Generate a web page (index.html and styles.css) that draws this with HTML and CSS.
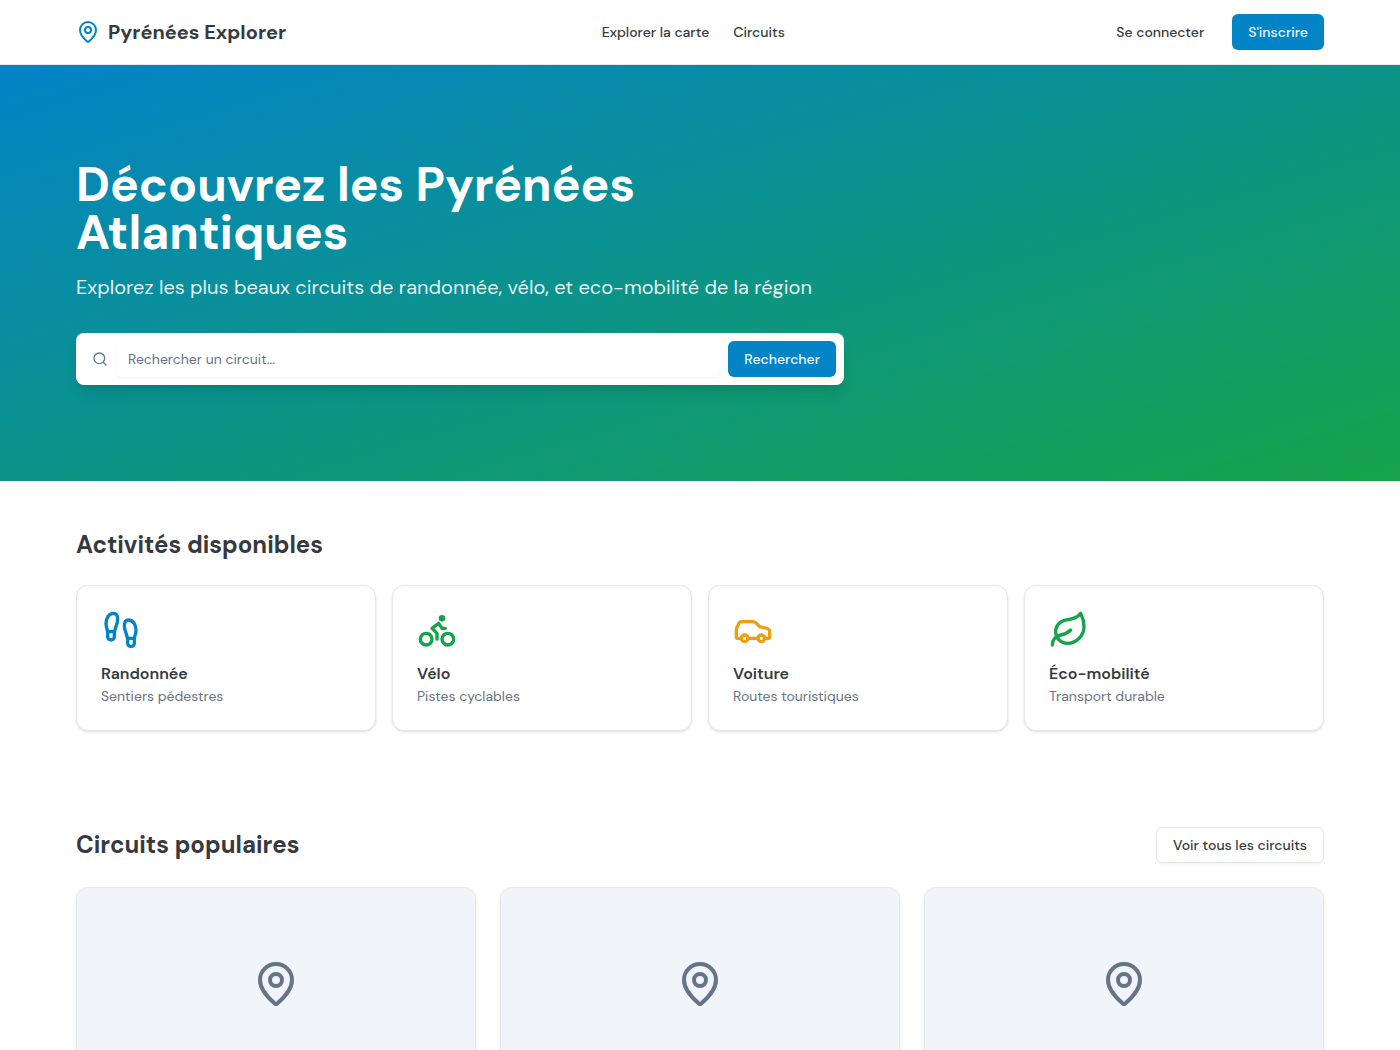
FILE: index.html
```html
<!DOCTYPE html>
<html lang="fr">
<head>
    <meta charset="UTF-8">
    <meta name="viewport" content="width=device-width, initial-scale=1.0">
    <title>Pyrénées Explorer</title>
    <link rel="stylesheet" href="styles.css">
</head>
<body>

<!-- Shared map pin -->
<svg class="sprite" aria-hidden="true">
    <symbol id="pin" viewBox="0 0 24 24">
        <path d="M20 10c0 4.993-5.539 10.193-7.399 11.799a1 1 0 0 1-1.202 0C9.539 20.193 4 14.993 4 10a8 8 0 0 1 16 0"/>
        <circle cx="12" cy="10" r="3"/>
    </symbol>
</svg>

<header class="header">
    <div class="container header-inner">
        <a href="#" class="logo">
            <svg class="icon logo-icon"><use href="#pin"/></svg>
            <span>Pyrénées Explorer</span>
        </a>
        <nav class="nav">
            <a href="#carte">Explorer la carte</a>
            <a href="#circuits">Circuits</a>
        </nav>
        <div class="header-actions">
            <button type="button" class="btn">Se connecter</button>
            <button type="button" class="btn btn-primary">S'inscrire</button>
        </div>
    </div>
</header>

<main>
    <section class="hero">
        <div class="container">
            <div class="hero-content">
                <h1>Découvrez les Pyrénées Atlantiques</h1>
                <p>Explorez les plus beaux circuits de randonnée, vélo, et eco-mobilité de la région</p>
                <form class="search">
                    <label for="search" class="search-label">
                        <svg class="icon" viewBox="0 0 24 24" aria-hidden="true"><circle cx="11" cy="11" r="8"/><path d="m21 21-4.3-4.3"/></svg>
                    </label>
                    <input type="text" id="search" aria-label="Rechercher un circuit" placeholder="Rechercher un circuit...">
                    <button type="submit" class="btn btn-primary">Rechercher</button>
                </form>
            </div>
        </div>
    </section>

    <section class="section">
        <div class="container">
            <h2>Activités disponibles</h2>
            <div class="activities">
                <a href="#randonnee" class="card activity blue">
                    <svg class="icon" viewBox="0 0 24 24"><path d="M4 16v-2.38C4 11.5 2.97 10.5 3 8c.03-2.72 1.49-6 4.5-6C9.37 2 10 3.8 10 5.5c0 3.11-2 5.66-2 8.68V16a2 2 0 1 1-4 0Z"/><path d="M20 20v-2.38c0-2.12 1.03-3.12 1-5.62-.03-2.72-1.49-6-4.5-6C14.63 6 14 7.8 14 9.5c0 3.11 2 5.66 2 8.68V20a2 2 0 1 0 4 0Z"/><path d="M16 17h4"/><path d="M4 13h4"/></svg>
                    <h3>Randonnée</h3>
                    <p>Sentiers pédestres</p>
                </a>
                <a href="#velo" class="card activity green">
                    <svg class="icon" viewBox="0 0 24 24"><circle cx="18.5" cy="17.5" r="3.5"/><circle cx="5.5" cy="17.5" r="3.5"/><circle cx="15" cy="5" r="1"/><path d="M12 17.5V14l-3-3 4-3 2 3h2"/></svg>
                    <h3>Vélo</h3>
                    <p>Pistes cyclables</p>
                </a>
                <a href="#voiture" class="card activity amber">
                    <svg class="icon" viewBox="0 0 24 24"><path d="M19 17h2c.6 0 1-.4 1-1v-3c0-.9-.7-1.7-1.5-1.9C18.7 10.6 16 10 16 10s-1.3-1.4-2.2-2.3c-.5-.4-1.1-.7-1.8-.7H5c-.6 0-1.1.4-1.4.9l-1.4 2.9A3.7 3.7 0 0 0 2 12v4c0 .6.4 1 1 1h2"/><circle cx="7" cy="17" r="2"/><path d="M9 17h6"/><circle cx="17" cy="17" r="2"/></svg>
                    <h3>Voiture</h3>
                    <p>Routes touristiques</p>
                </a>
                <a href="#eco" class="card activity green">
                    <svg class="icon" viewBox="0 0 24 24"><path d="M11 20A7 7 0 0 1 9.8 6.1C15.5 5 17 4.48 19 2c1 2 2 4.18 2 8 0 5.5-4.78 10-10 10Z"/><path d="M2 21c0-3 1.85-5.36 5.08-6C9.5 14.52 12 13 13 12"/></svg>
                    <h3>Éco-mobilité</h3>
                    <p>Transport durable</p>
                </a>
            </div>
        </div>
    </section>

    <section class="section" id="circuits">
        <div class="container">
            <div class="section-head">
                <h2>Circuits populaires</h2>
                <button type="button" class="btn btn-outline">Voir tous les circuits</button>
            </div>
            <div class="circuits">
                <div class="card circuit">
                    <div class="circuit-image"><svg class="icon"><use href="#pin"/></svg></div>
                </div>
                <div class="card circuit">
                    <div class="circuit-image"><svg class="icon"><use href="#pin"/></svg></div>
                </div>
                <div class="card circuit">
                    <div class="circuit-image"><svg class="icon"><use href="#pin"/></svg></div>
                </div>
            </div>
        </div>
    </section>
</main>

</body>
</html>
```
FILE: styles.css
```css
* {
    box-sizing: border-box;
    margin: 0;
    padding: 0;
}

body {
    font-family: 'DM Sans', Inter, sans-serif;
    font-size: 16px;
    line-height: 24px;
    color: #363a3f;
    background-color: #fff;
}

a {
    color: inherit;
    text-decoration: none;
}

.sprite {
    display: none;
}

.icon {
    display: block;
    width: 16px;
    height: 16px;
    fill: none;
    stroke: currentColor;
    stroke-width: 2;
    stroke-linecap: round;
    stroke-linejoin: round;
}

.container {
    max-width: 1280px;
    margin: 0 auto;
    padding: 0 16px;
}

/* Buttons */
.btn {
    height: 36px;
    padding: 0 16px;
    border: none;
    border-radius: 6px;
    font-family: inherit;
    font-size: 14px;
    font-weight: 500;
    line-height: 20px;
    color: inherit;
    background: none;
    white-space: nowrap;
    cursor: pointer;
}

.btn-primary {
    background-color: #0284c7;
    color: #f0f9ff;
}

.btn-primary:hover {
    background-color: #0274af;
}

.btn-outline {
    border: 1px solid #e2e5e9;
    background-color: #fff;
    box-shadow: 0 1px 2px rgba(0, 0, 0, 0.05);
}

/* Header */
.header {
    background-color: #fff;
    border-bottom: 1px solid #e5e7eb;
}

.header-inner {
    display: flex;
    align-items: center;
    justify-content: space-between;
    height: 64px;
}

.logo {
    display: flex;
    align-items: center;
    gap: 8px;
    font-size: 20px;
    line-height: 28px;
    font-weight: 700;
}

.logo-icon {
    width: 24px;
    height: 24px;
    color: #0284c7;
}

.nav {
    display: flex;
    gap: 24px;
    font-size: 14px;
    line-height: 20px;
    font-weight: 500;
}

.header-actions {
    display: flex;
    gap: 12px;
}

/* Hero */
.hero {
    padding: 96px 0;
    color: #fff;
    background: linear-gradient(to bottom right, #0284c7, #16a34a);
}

.hero-content {
    max-width: 768px;
}

h1 {
    font-size: 48px;
    line-height: 48px;
    font-weight: 700;
    margin-bottom: 16px;
}

.hero p {
    font-size: 20px;
    line-height: 28px;
    margin-bottom: 32px;
    color: rgba(255, 255, 255, 0.9);
}

.search {
    display: flex;
    align-items: center;
    gap: 8px;
    padding: 8px;
    border-radius: 8px;
    background-color: #fff;
    box-shadow: 0 10px 15px -3px rgba(0, 0, 0, 0.1), 0 4px 6px -4px rgba(0, 0, 0, 0.1);
}

.search-label {
    padding-left: 8px;
    color: #64748b;
}

.search input {
    flex: 1;
    min-width: 0;
    height: 36px;
    padding: 0 12px;
    border: none;
    border-radius: 6px;
    outline: none;
    font-family: inherit;
    font-size: 14px;
    color: #363a3f;
    box-shadow: 0 1px 2px rgba(0, 0, 0, 0.05);
}

.search input::placeholder {
    color: #64748b;
}

/* Sections */
.section {
    padding: 48px 0;
}

h2 {
    font-size: 24px;
    line-height: 32px;
    font-weight: 700;
}

.section-head {
    display: flex;
    align-items: center;
    justify-content: space-between;
}

.card {
    border: 1px solid #e5e7eb;
    border-radius: 12px;
    background-color: #fff;
    box-shadow: 0 1px 3px rgba(0, 0, 0, 0.1), 0 1px 2px -1px rgba(0, 0, 0, 0.1);
}

.activities {
    display: grid;
    grid-template-columns: repeat(4, 1fr);
    gap: 16px;
    margin-top: 24px;
}

.activity {
    padding: 24px;
}

.activity .icon {
    width: 40px;
    height: 40px;
    margin-bottom: 12px;
}

.activity h3 {
    font-size: 16px;
    line-height: 24px;
    font-weight: 600;
    color: #363a3f;
}

.activity p {
    font-size: 14px;
    line-height: 20px;
    color: #6b7280;
}

.blue {
    color: #0284c7;
}

.green {
    color: #16a34a;
}

.amber {
    color: #ee9f10;
}

.circuits {
    display: grid;
    grid-template-columns: repeat(3, 1fr);
    gap: 24px;
    margin-top: 24px;
}

.circuit {
    overflow: hidden;
}

.circuit-image {
    display: flex;
    align-items: center;
    justify-content: center;
    height: 192px;
    background-color: #f1f5f9;
    color: #64748b;
}

.circuit-image .icon {
    width: 48px;
    height: 48px;
}
```
